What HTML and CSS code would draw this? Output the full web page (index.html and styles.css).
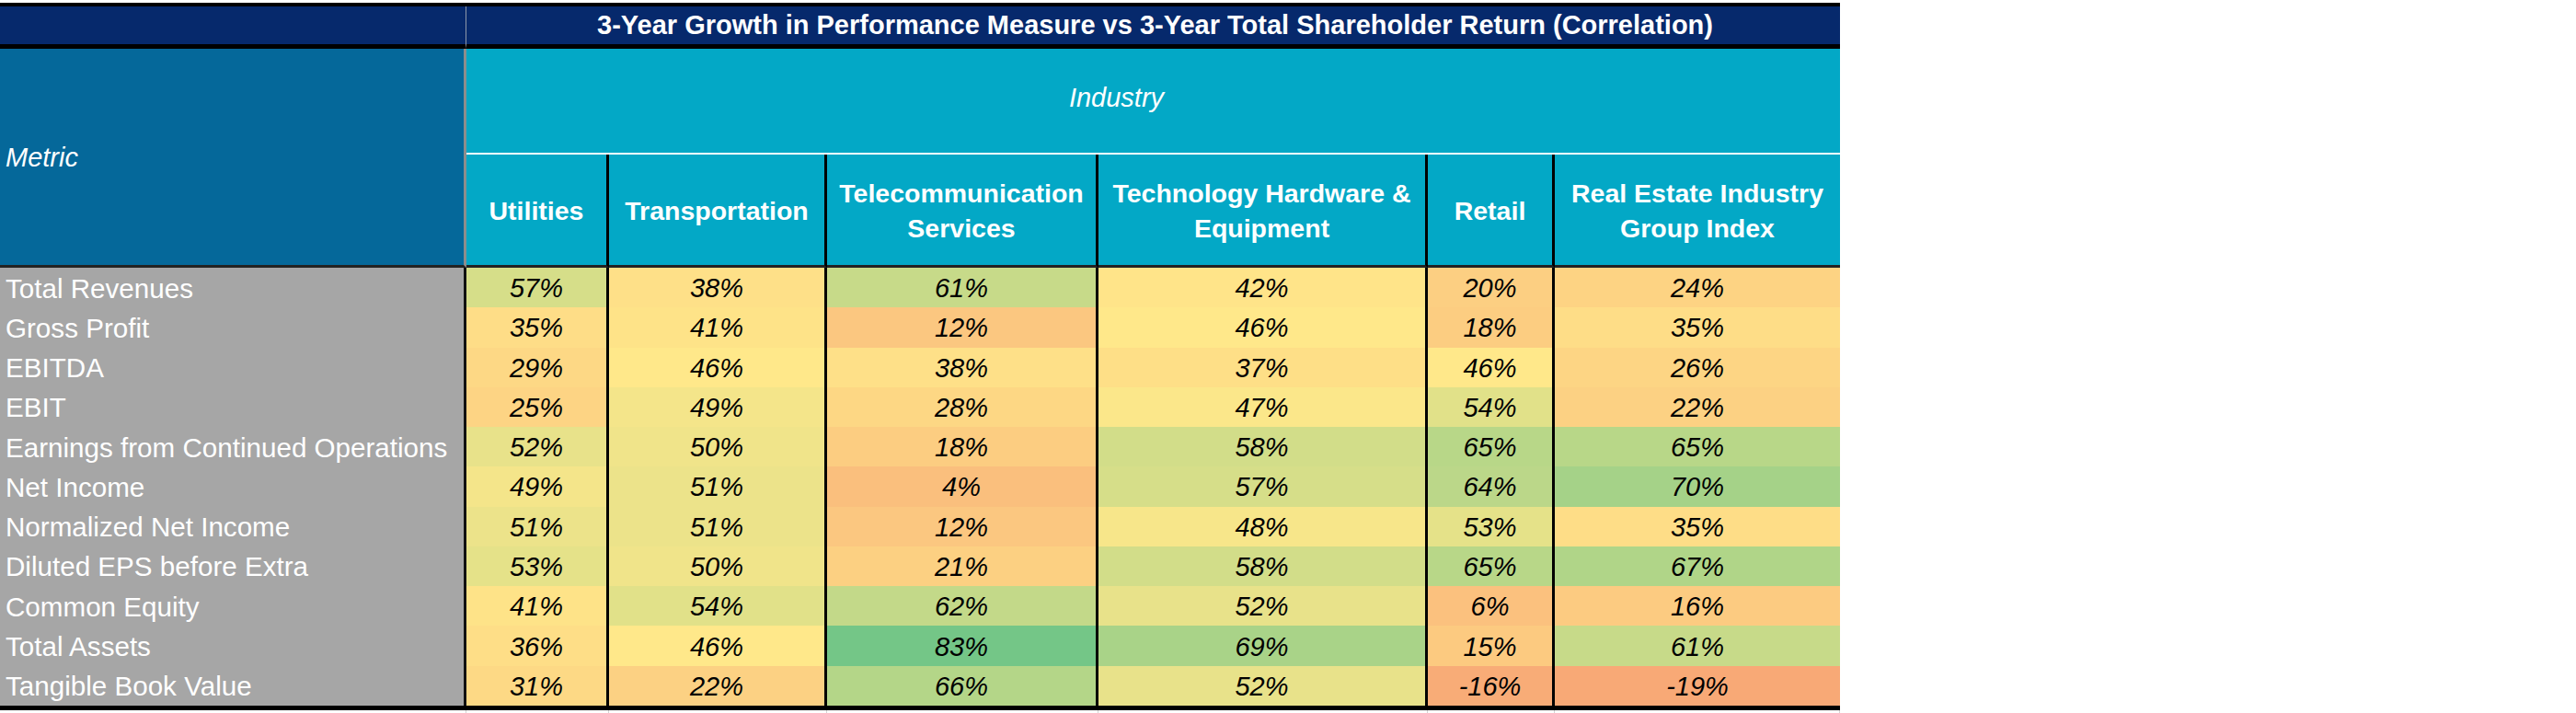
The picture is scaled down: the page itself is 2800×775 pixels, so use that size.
FILE: index.html
```html
<!DOCTYPE html>
<html>
<head>
<meta charset="utf-8">
<title>3-Year Growth vs TSR</title>
<link rel="stylesheet" href="styles.css">
</head>
<body>
<div class="sheet">
  <div class="title-left"></div>
  <div class="title">3-Year Growth in Performance Measure vs 3-Year Total Shareholder Return (Correlation)</div>

  <div class="metric">Metric</div>
  <div class="industry">Industry</div>
  <div class="colhead">Utilities</div>
  <div class="colhead">Transportation</div>
  <div class="colhead">Telecommunication<br>Services</div>
  <div class="colhead">Technology Hardware &amp;<br>Equipment</div>
  <div class="colhead">Retail</div>
  <div class="colhead last">Real Estate Industry<br>Group Index</div>

  <div class="label">Total Revenues</div>
  <div class="cell" style="--v:57">57%</div><div class="cell" style="--v:38">38%</div><div class="cell" style="--v:61">61%</div><div class="cell" style="--v:42">42%</div><div class="cell" style="--v:20">20%</div><div class="cell last" style="--v:24">24%</div>

  <div class="label">Gross Profit</div>
  <div class="cell" style="--v:35">35%</div><div class="cell" style="--v:41">41%</div><div class="cell" style="--v:12">12%</div><div class="cell" style="--v:46">46%</div><div class="cell" style="--v:18">18%</div><div class="cell last" style="--v:35">35%</div>

  <div class="label">EBITDA</div>
  <div class="cell" style="--v:29">29%</div><div class="cell" style="--v:46">46%</div><div class="cell" style="--v:38">38%</div><div class="cell" style="--v:37">37%</div><div class="cell" style="--v:46">46%</div><div class="cell last" style="--v:26">26%</div>

  <div class="label">EBIT</div>
  <div class="cell" style="--v:25">25%</div><div class="cell" style="--v:49">49%</div><div class="cell" style="--v:28">28%</div><div class="cell" style="--v:47">47%</div><div class="cell" style="--v:54">54%</div><div class="cell last" style="--v:22">22%</div>

  <div class="label">Earnings from Continued Operations</div>
  <div class="cell" style="--v:52">52%</div><div class="cell" style="--v:50">50%</div><div class="cell" style="--v:18">18%</div><div class="cell" style="--v:58">58%</div><div class="cell" style="--v:65">65%</div><div class="cell last" style="--v:65">65%</div>

  <div class="label">Net Income</div>
  <div class="cell" style="--v:49">49%</div><div class="cell" style="--v:51">51%</div><div class="cell" style="--v:4">4%</div><div class="cell" style="--v:57">57%</div><div class="cell" style="--v:64">64%</div><div class="cell last" style="--v:70">70%</div>

  <div class="label">Normalized Net Income</div>
  <div class="cell" style="--v:51">51%</div><div class="cell" style="--v:51">51%</div><div class="cell" style="--v:12">12%</div><div class="cell" style="--v:48">48%</div><div class="cell" style="--v:53">53%</div><div class="cell last" style="--v:35">35%</div>

  <div class="label">Diluted EPS before Extra</div>
  <div class="cell" style="--v:53">53%</div><div class="cell" style="--v:50">50%</div><div class="cell" style="--v:21">21%</div><div class="cell" style="--v:58">58%</div><div class="cell" style="--v:65">65%</div><div class="cell last" style="--v:67">67%</div>

  <div class="label">Common Equity</div>
  <div class="cell" style="--v:41">41%</div><div class="cell" style="--v:54">54%</div><div class="cell" style="--v:62">62%</div><div class="cell" style="--v:52">52%</div><div class="cell" style="--v:6">6%</div><div class="cell last" style="--v:16">16%</div>

  <div class="label">Total Assets</div>
  <div class="cell" style="--v:36">36%</div><div class="cell" style="--v:46">46%</div><div class="cell" style="--v:83">83%</div><div class="cell" style="--v:69">69%</div><div class="cell" style="--v:15">15%</div><div class="cell last" style="--v:61">61%</div>

  <div class="label">Tangible Book Value</div>
  <div class="cell" style="--v:31">31%</div><div class="cell" style="--v:22">22%</div><div class="cell" style="--v:66">66%</div><div class="cell" style="--v:52">52%</div><div class="cell" style="--v:-16">-16%</div><div class="cell last" style="--v:-19">-19%</div>
</div>
<div class="gridstrip">
  <span></span><span></span><span></span><span></span><span></span><span></span><span></span>
</div>
</body>
</html>
```

FILE: styles.css
```css
* {
  box-sizing: border-box;
}

body {
  margin: 0;
  background: #ffffff;
  font-family: "Liberation Sans", Arial, sans-serif;
}

.sheet,
.gridstrip {
  display: grid;
  grid-template-columns: 507px 155px 237px 295px 358px 138px 310px;
  width: 2000px;
}

.sheet {
  margin-top: 3px;
  border-top: 4px solid #000;
  border-bottom: 5px solid #000;
}

.title-left {
  height: 46px;
  background: #06296c;
  border-right: 1px solid #8f98a8;
  border-bottom: 5px solid #000;
}

.title {
  grid-column: 2 / -1;
  height: 46px;
  background: #06296c;
  border-bottom: 5px solid #000;
  color: #fff;
  font-weight: bold;
  font-size: 29px;
  display: flex;
  align-items: center;
  justify-content: center;
  padding-left: 4px;
}

.metric {
  grid-row: span 2;
  background: #05689a;
  border-right: 3px solid #8d8d8d;
  border-bottom: 3px solid #222;
  color: #fff;
  font-style: italic;
  font-size: 29px;
  display: flex;
  align-items: center;
  padding-left: 6px;
  padding-top: 2px;
}

.industry {
  grid-column: 2 / -1;
  height: 115px;
  background: #03a8c6;
  border-bottom: 2px solid #fff;
  color: #fff;
  font-style: italic;
  font-size: 29px;
  display: flex;
  align-items: center;
  justify-content: center;
  padding-right: 80px;
  padding-bottom: 6px;
}

.colhead {
  height: 123px;
  background: #03a8c6;
  border-right: 3px solid #000;
  border-bottom: 3px solid #222;
  color: #fff;
  font-weight: bold;
  font-size: 28.5px;
  line-height: 38px;
  text-align: center;
  display: flex;
  align-items: center;
  justify-content: center;
  padding-top: 2px;
}

.label {
  height: 43.27px;
  background: #a6a6a6;
  border-right: 3px solid #111;
  color: #fff;
  font-size: 29.6px;
  display: flex;
  align-items: center;
  padding-left: 6px;
  padding-top: 2px;
  white-space: nowrap;
}

.cell {
  --tl: clamp(0, calc((var(--v) + 19) / 65), 1);
  --th: clamp(0, calc((var(--v) - 46) / 37), 1);
  height: 43.27px;
  background: rgb(calc(248 + 7 * var(--tl) - 139 * var(--th)) calc(169 + 63 * var(--tl) - 34 * var(--th)) calc(118 + 20 * var(--tl) - 3 * var(--th)));
  border-right: 3px solid #000;
  color: #000;
  font-style: italic;
  font-size: 29px;
  display: flex;
  align-items: center;
  justify-content: center;
  padding-top: 2px;
}

.last {
  border-right: none;
}

.gridstrip span {
  height: 3px;
  border-right: 1px solid #d2d2d2;
}
```
